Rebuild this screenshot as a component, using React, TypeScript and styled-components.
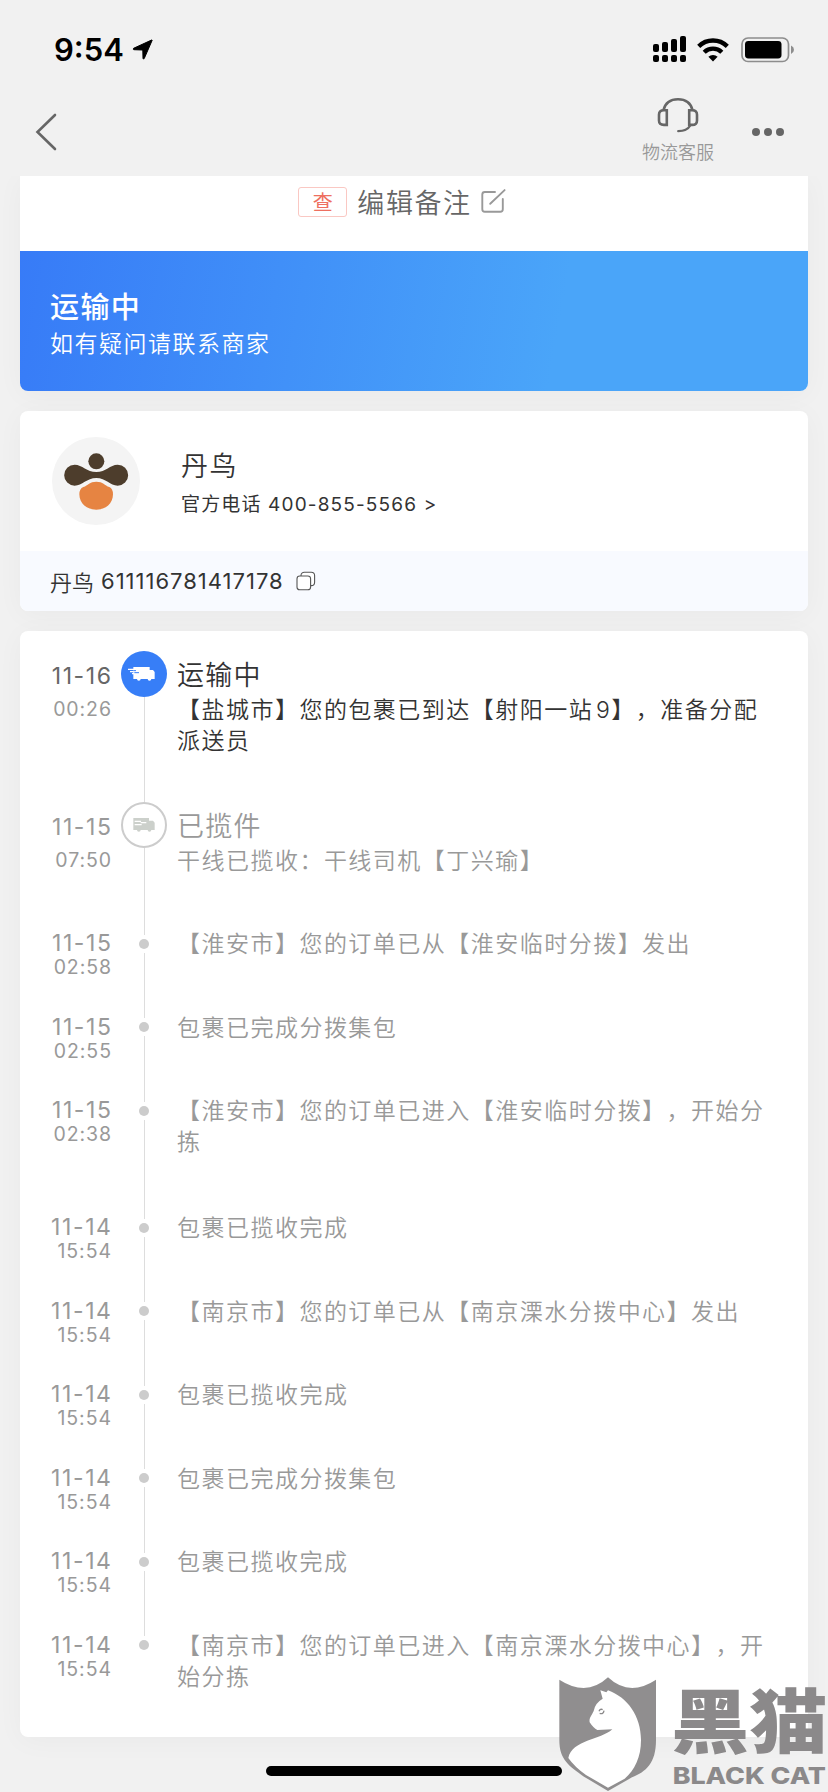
import React from 'react';
import styled, {createGlobalStyle} from 'styled-components';

const GlobalStyle = createGlobalStyle`
  * {
    box-sizing: border-box;
  }

  body {
    margin: 0;
    background: #f1f1f1;
    font-family: Inter, 'Noto Sans CJK SC', sans-serif;
    font-weight: 350;
    text-spacing-trim: space-all;
    text-autospace: normal;
    -webkit-font-smoothing: antialiased;
  }
`;

const Screen = styled.div`
  position: relative;
  display: flex;
  flex-direction: column;
  width: 828px;
  height: 1792px;
  overflow: hidden;
  background: #f1f1f1;
`;

const Header = styled.header`
  z-index: 1;
  flex: none;
  height: 176px;
  background: #f1f1f1;
`;

const StatusBar = styled.div`
  display: flex;
  justify-content: space-between;
  height: 88px;
  padding: 30px 33px 0 54px;
`;

const StatusGroup = styled.div`
  display: flex;
  align-items: center;
  gap: 10px;
  height: 39px;
`;

const Clock = styled.span`
  margin-right: -2px;
  color: #000;
  font-size: 31px;
  font-weight: 600;
  line-height: 39px;
`;

const NavBar = styled.div`
  display: flex;
  justify-content: space-between;
  height: 88px;
  padding: 0 44px 0 35px;
`;

const BackButton = styled.div`
  display: flex;
  align-items: center;
`;

const NavActions = styled.div`
  display: flex;
  gap: 38px;
`;

const Service = styled.div`
  display: flex;
  flex-direction: column;
  align-items: center;
  padding-top: 9px;
  color: #999;
  font-size: 18px;
  line-height: 24px;

  svg {
    margin-bottom: 8px;
  }
`;

const More = styled.div`
  display: flex;
  align-items: center;
  gap: 4px;
`;

const MoreDot = styled.i`
  width: 8px;
  height: 8px;
  border-radius: 50%;
  background: #666;
`;

const Content = styled.main`
  display: flex;
  flex-direction: column;
  gap: 20px;
  padding: 0 20px;
`;

const Card = styled.section<{$flatTop?: boolean}>`
  overflow: hidden;
  border-radius: ${({$flatTop}) => ($flatTop ? '0 0 8px 8px' : '8px')};
  background: #fff;
  box-shadow: 0 4px 28px rgba(0, 0, 0, 0.035);
`;

const Remark = styled.div`
  display: flex;
  justify-content: center;
  align-items: flex-start;
  height: 75px;
  padding: 11px 22px 0 0;
`;

const Tag = styled.span`
  width: 49px;
  height: 30px;
  margin-right: 10px;
  border: 1px solid #fac8c3;
  border-radius: 3px;
  color: #ee6f60;
  font-size: 20px;
  font-weight: 400;
  line-height: 30px;
  text-align: center;
`;

const RemarkText = styled.span`
  margin-right: 8px;
  color: #666;
  font-size: 27px;
  letter-spacing: 1.6px;
  line-height: 33px;
`;

const Banner = styled.div`
  height: 140px;
  padding: 38px 30px 0;
  background: linear-gradient(100deg, #377bf7 0%, #4aa5f9 68%, #4aa5f9 100%);
  color: #fff;
`;

const BannerTitle = styled.div`
  font-size: 29px;
  font-weight: 500;
  letter-spacing: 1.4px;
  line-height: 38px;
`;

const BannerText = styled.div`
  font-size: 23px;
  letter-spacing: 1.5px;
  line-height: 35px;
`;

const Carrier = styled.div`
  display: flex;
  align-items: flex-start;
  height: 140px;
  padding: 26px 32px 0;
`;

const CarrierInfo = styled.div`
  margin-left: 41px;
  padding-top: 11px;
  color: #333;
`;

const CarrierName = styled.div`
  font-size: 27px;
  letter-spacing: 1.6px;
  line-height: 38px;
`;

const CarrierPhone = styled.div`
  font-size: 19px;
  font-weight: 400;
  letter-spacing: 1.15px;
  line-height: 37px;
`;

const Tracking = styled.div`
  display: flex;
  align-items: center;
  height: 60px;
  padding: 0 30px;
  background: #f8faff;
  color: #333;
  font-size: 22px;
`;

const TrackingNumber = styled.span`
  margin: 0 12px 0 7px;
  font-weight: 400;
  letter-spacing: 1px;
`;

const Timeline = styled.div`
  height: 1106px;
  padding: 24.5px 0 0 24px;
`;

const Step = styled.div<{$major: boolean}>`
  display: flex;
  min-height: ${({$major}) => ($major ? '121.8px' : '83.55px')};
`;

const When = styled.div`
  width: 68px;
  padding-right: 1px;
  color: #999;
  font-weight: 400;
  text-align: right;
`;

const StepDate = styled.div<{$major: boolean; $active?: boolean}>`
  margin-right: -1.6px;
  color: ${({$active}) => ($active ? '#666' : '#999')};
  font-size: 23px;
  letter-spacing: 1.6px;
  line-height: ${({$major}) => ($major ? '40px' : '31px')};
`;

const StepTime = styled.div<{$major: boolean}>`
  margin-right: -0.9px;
  font-size: 19.5px;
  letter-spacing: 0.9px;
  line-height: ${({$major}) => ($major ? '27px' : '16px')};
`;

const Axis = styled.div`
  display: flex;
  flex-direction: column;
  align-items: center;
  width: 46px;
  margin: 0 10px 0 9px;
`;

const Rail = styled.div<{$height?: string; $hidden?: boolean}>`
  flex: ${({$height}) => ($height ? 'none' : '1')};
  width: 1px;
  height: ${({$height}) => $height || 'auto'};
  margin-left: 1px;
  background: ${({$hidden}) => ($hidden ? 'transparent' : '#ddd')};
`;

const Badge = styled.div<{$active?: boolean}>`
  display: flex;
  justify-content: center;
  align-items: center;
  width: 46px;
  height: 46px;
  margin: -4.5px 0 0;
  border: ${({$active}) => ($active ? 'none' : '2px solid #ccc')};
  border-radius: 50%;
  background: ${({$active}) => ($active ? '#377ef7' : '#fff')};
`;

const Dot = styled.div`
  width: 10px;
  height: 10px;
  margin: 4px 0;
  border-radius: 50%;
  background: #ccc;
`;

const Detail = styled.div<{$active?: boolean; $gap: number}>`
  width: 595px;
  padding-bottom: ${({$gap}) => $gap}px;
  color: ${({$active}) => ($active ? '#333' : '#999')};
`;

const StepTitle = styled.div`
  padding-top: 1px;
  font-size: 27px;
  letter-spacing: 1.3px;
  line-height: 37px;
`;

const StepText = styled.div`
  padding-top: 1px;
  font-size: 23px;
  letter-spacing: 1.48px;
  line-height: 31px;
`;

const HomeBar = styled.div`
  position: absolute;
  left: 266px;
  bottom: 16px;
  width: 296px;
  height: 10px;
  border-radius: 5px;
  background: #000;
`;

const Watermark = styled.svg`
  position: absolute;
  right: 0;
  bottom: 0;
`;

const LocationIcon = () => (
  <svg width="22" height="22" viewBox="0 0 22 22">
    <path
      d="M20.2 1.2 L12.2 19.6 Q11.6 20.6 11 19.4 L10.8 11 L1.8 10.7 Q0.6 10.2 1.6 9.3 L19 1.3 Q20.4 0.6 20.2 1.2Z"
      fill="#000"
      stroke="#000"
      strokeLinejoin="round"
    />
  </svg>
);

const SignalIcon = () => (
  <svg width="34" height="28" viewBox="0 0 34 28" fill="#000">
    {[8, 6, 3, 0].map((top, i) => (
      <g key={top}>
        <rect x={i * 9} y={top} width="6" height={16 - top} rx="2" />
        <rect x={i * 9} y="19" width="6" height="7" rx="2" />
      </g>
    ))}
  </svg>
);

const WifiIcon = () => (
  <svg width="34" height="24" viewBox="0 0 34 24">
    <g fill="none" stroke="#000" strokeWidth="4.4">
      <path d="M1.7 8.4a20.4 20.4 0 0 1 28.6 0" />
      <path d="M7.2 14.2a12.6 12.6 0 0 1 17.6 0" />
    </g>
    <path d="M11.4 18.8a6.6 6.6 0 0 1 9.2 0L16 23.6z" fill="#000" />
  </svg>
);

const BatteryIcon = () => (
  <svg width="54" height="26" viewBox="0 0 54 26">
    <rect x="1" y="1" width="46.5" height="23.5" rx="6" fill="none" stroke="#8d8d8d" strokeWidth="1.7" />
    <rect x="4" y="4" width="36.5" height="17.5" rx="3.4" fill="#000" />
    <path d="M50 8.6q3 1.4 3 4.2t-3 4.2z" fill="#8d8d8d" />
  </svg>
);

const HeadsetIcon = () => (
  <svg width="42" height="36" viewBox="0 0 42 36" fill="none" stroke="#666" strokeWidth="2.6">
    <path d="M6.5 13C8.3 5.8 14 2.2 21 2.2S33.7 5.8 35.5 13" />
    <path d="M9.8 13.2v14.7H6.8Q2 27.9 2 23.4v-5.7q0-4.5 4.8-4.5z" />
    <path d="M32.2 13.2v14.7h3Q40 27.9 40 23.4v-5.7q0-4.5-4.8-4.5z" />
    <path d="M33.5 28.3q-3.5 5.9-12.3 5.9" strokeWidth="2.2" strokeLinecap="round" />
  </svg>
);

const EditIcon = () => (
  <svg width="28" height="30" viewBox="0 0 28 30" fill="none" stroke="#999" strokeWidth="1.9" strokeLinecap="round">
    <path d="M15 5H4.8Q2.3 5 2.3 7.5V22.2Q2.3 24.7 4.8 24.7H20.3Q22.8 24.7 22.8 22.2V12" />
    <path d="M10.2 16.8L24.6 3.1" />
  </svg>
);

const CopyIcon = () => (
  <svg width="20" height="20" viewBox="0 0 20 20" stroke="#555" strokeWidth="1.1">
    <rect x="5" y="1.2" width="13.6" height="13.4" rx="3.4" fill="#fff" />
    <rect x="1" y="5" width="13.6" height="13.8" rx="2.8" fill="#fff" />
  </svg>
);

const CarrierLogo = () => (
  <svg width="88" height="88" viewBox="0 0 264 264">
    <circle cx="132" cy="132" r="132" fill="#f4f4f4" />
    <circle cx="133" cy="73" r="24" fill="#4d3d2c" />
    <path
      d="M68 83C91 83 104 105 133 105S174 83 197 83a31.5 31.5 0 0 1 0 63C174 146 162 123 133 123S91 146 68 146a31.5 31.5 0 0 1 0-63z"
      fill="#4d3d2c"
    />
    <path
      d="M133 134C153 134 158 145 172 150Q183 155 183 172C183 200 161 218 133 218S82 200 82 172Q82 155 94 150C108 145 113 134 133 134z"
      fill="#e68442"
    />
  </svg>
);

const ExpressTruck = () => (
  <svg width="32" height="16" viewBox="84 78 96 48">
    <path d="M100 81H149V90H159L164 96V117H154A5 5 0 0 1 143 117H122A5 5 0 0 1 111 117H100z" fill="#fff" />
    <path d="M84 88H104M90 95H104M96 101H104" stroke="#fff" strokeWidth="3.5" />
    <path d="M100 92H108M103 98H117" stroke="#377ef7" strokeWidth="3" />
  </svg>
);

const PickupTruck = () => (
  <svg width="32" height="16" viewBox="84 531 96 48">
    <path d="M100 534H147V542H159L164 548V570H154A5 5 0 0 1 143 570H122A5 5 0 0 1 111 570H100z" fill="#ccd0cb" />
    <path d="M104 544H123M104 554H125M122 548H139" stroke="#fff" strokeWidth="3.5" />
  </svg>
);

interface StepData {
  date: string;
  time: string;
  title?: string;
  text: string;
  icon?: React.ReactNode;
}

const steps: StepData[] = [
  {date: '11-16', time: '00:26', title: '运输中', text: '【盐城市】您的包裹已到达【射阳一站9】，准备分配派送员', icon: <ExpressTruck />},
  {date: '11-15', time: '07:50', title: '已揽件', text: '干线已揽收：干线司机【丁兴瑜】', icon: <PickupTruck />},
  {date: '11-15', time: '02:58', text: '【淮安市】您的订单已从【淮安临时分拨】发出'},
  {date: '11-15', time: '02:55', text: '包裹已完成分拨集包'},
  {date: '11-15', time: '02:38', text: '【淮安市】您的订单已进入【淮安临时分拨】，开始分拣'},
  {date: '11-14', time: '15:54', text: '包裹已揽收完成'},
  {date: '11-14', time: '15:54', text: '【南京市】您的订单已从【南京溧水分拨中心】发出'},
  {date: '11-14', time: '15:54', text: '包裹已揽收完成'},
  {date: '11-14', time: '15:54', text: '包裹已完成分拨集包'},
  {date: '11-14', time: '15:54', text: '包裹已揽收完成'},
  {date: '11-14', time: '15:54', text: '【南京市】您的订单已进入【南京溧水分拨中心】，开始分拣'},
];

// one line fits 24 characters
const getGap = (text: string, major: boolean) => {
  if (major) return 50;
  return text.length > 24 ? 53.8 : 50;
};

const App = () => (
  <>
    <GlobalStyle />
    <Screen>
      <Header>
        <StatusBar>
          <StatusGroup>
            <Clock>9:54</Clock>
            <LocationIcon />
          </StatusGroup>
          <StatusGroup>
            <SignalIcon />
            <WifiIcon />
            <BatteryIcon />
          </StatusGroup>
        </StatusBar>
        <NavBar>
          <BackButton>
            <svg width="22" height="38" viewBox="0 0 22 38" fill="none" stroke="#666" strokeWidth="2.6" strokeLinecap="round">
              <path d="M20 2L2.5 19L20 36" />
            </svg>
          </BackButton>
          <NavActions>
            <Service>
              <HeadsetIcon />
              物流客服
            </Service>
            <More>
              <MoreDot />
              <MoreDot />
              <MoreDot />
            </More>
          </NavActions>
        </NavBar>
      </Header>

      <Content>
        <Card $flatTop>
          <Remark>
            <Tag>查</Tag>
            <RemarkText>编辑备注</RemarkText>
            <EditIcon />
          </Remark>
          <Banner>
            <BannerTitle>运输中</BannerTitle>
            <BannerText>如有疑问请联系商家</BannerText>
          </Banner>
        </Card>

        <Card>
          <Carrier>
            <CarrierLogo />
            <CarrierInfo>
              <CarrierName>丹鸟</CarrierName>
              <CarrierPhone>官方电话 400-855-5566 &gt;</CarrierPhone>
            </CarrierInfo>
          </Carrier>
          <Tracking>
            丹鸟
            <TrackingNumber>611116781417178</TrackingNumber>
            <CopyIcon />
          </Tracking>
        </Card>

        <Card>
          <Timeline>
            {steps.map(({date, time, title, text, icon}, i) => {
              const major = !!title;
              const active = i === 0;
              const last = i === steps.length - 1;

              return (
                <Step key={i} $major={major}>
                  <When>
                    <StepDate $major={major} $active={active}>{date}</StepDate>
                    <StepTime $major={major}>{time}</StepTime>
                  </When>
                  <Axis>
                    {major ? <Badge $active={active}>{icon}</Badge> : (
                      <>
                        <Rail $height="6.5px" />
                        <Dot />
                      </>
                    )}
                    <Rail $hidden={last} />
                  </Axis>
                  <Detail $active={active} $gap={getGap(text, major)}>
                    {title && <StepTitle>{title}</StepTitle>}
                    <StepText>{text}</StepText>
                  </Detail>
                </Step>
              );
            })}
          </Timeline>
        </Card>
      </Content>

      <HomeBar />

      <Watermark width="288" height="132" viewBox="0 0 864 396">
        <path
          d="M58 59Q140 112 204 52Q268 112 348 59V240C348 310 318 335 276 352L204 393L132 350C88 318 58 300 58 240z"
          fill="#8b898a"
          fillOpacity="0.96"
        />
        <path
          d="M181 91L199 97L204 91C262 112 303 168 303 240C303 292 284 330 254 356L204 383L138 345Q104 321 85 294C96 240 182 240 217 208L172 210Q160 204 149 187C146 172 158 164 162 150Q166 129 188 116z"
          fill="#fff"
        />
        <path d="M177 154Q181 145 188 149M179 160Q190 164 192 152" fill="none" stroke="#8b898a" strokeWidth="4" />
        <g fill="#8b898a" fontFamily="Inter, 'Noto Sans CJK SC', sans-serif" fontWeight="900">
          <text x="393" y="264" fontSize="212" textLength="470" lengthAdjust="spacingAndGlyphs">黑猫</text>
          <text x="398" y="373" fontSize="68" fontWeight="800" textLength="460" lengthAdjust="spacingAndGlyphs">BLACK CAT</text>
        </g>
      </Watermark>
    </Screen>
  </>
);

export default App;
